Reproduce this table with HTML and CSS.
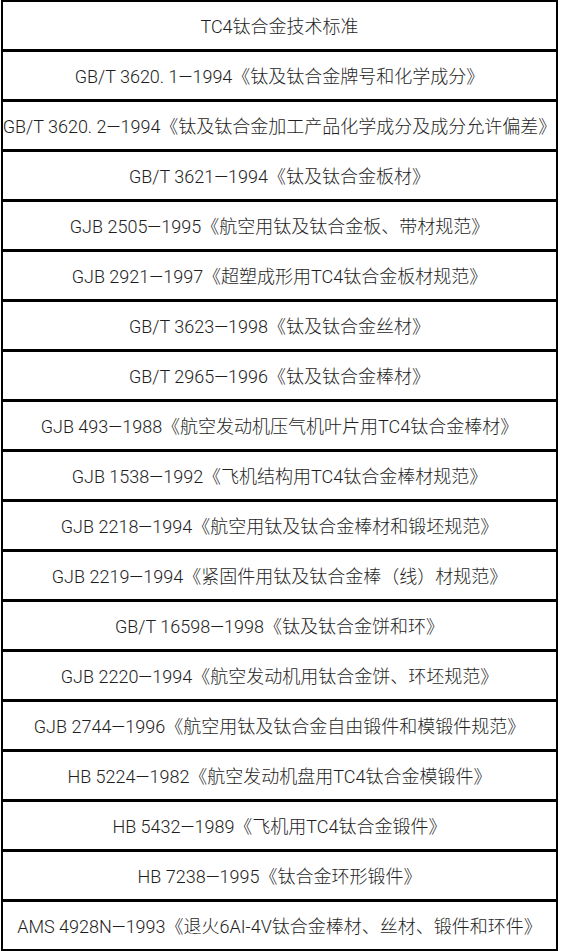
FILE: index.html
```html
<!DOCTYPE html>
<html lang="zh-CN">
<head>
<meta charset="utf-8">
<title>TC4钛合金技术标准</title>
<link rel="stylesheet" href="styles.css">
</head>
<body>
<div class="table">
  <div class="row">TC4钛合金技术标准</div>
  <div class="row">GB/T 3620. 1—1994《钛及钛合金牌号和化学成分》</div>
  <div class="row">GB/T 3620. 2—1994《钛及钛合金加工产品化学成分及成分允许偏差》</div>
  <div class="row">GB/T 3621—1994《钛及钛合金板材》</div>
  <div class="row">GJB 2505—1995《航空用钛及钛合金板、带材规范》</div>
  <div class="row">GJB 2921—1997《超塑成形用TC4钛合金板材规范》</div>
  <div class="row">GB/T 3623—1998《钛及钛合金丝材》</div>
  <div class="row">GB/T 2965—1996《钛及钛合金棒材》</div>
  <div class="row">GJB 493—1988《航空发动机压气机叶片用TC4钛合金棒材》</div>
  <div class="row">GJB 1538—1992《飞机结构用TC4钛合金棒材规范》</div>
  <div class="row">GJB 2218—1994《航空用钛及钛合金棒材和锻坯规范》</div>
  <div class="row">GJB 2219—1994《紧固件用钛及钛合金棒（线）材规范》</div>
  <div class="row">GB/T 16598—1998《钛及钛合金饼和环》</div>
  <div class="row">GJB 2220—1994《航空发动机用钛合金饼、环坯规范》</div>
  <div class="row">GJB 2744—1996《航空用钛及钛合金自由锻件和模锻件规范》</div>
  <div class="row">HB 5224—1982《航空发动机盘用TC4钛合金模锻件》</div>
  <div class="row">HB 5432—1989《飞机用TC4钛合金锻件》</div>
  <div class="row">HB 7238—1995《钛合金环形锻件》</div>
  <div class="row">AMS 4928N—1993《退火6AI-4V钛合金棒材、丝材、锻件和环件》</div>
</div>
</body>
</html>
```
FILE: styles.css
```css
html, body {
  margin: 0;
  padding: 0;
  background: #ffffff;
}
body {
  font-family: "Roboto", "Noto Sans CJK SC", sans-serif;
  font-weight: 300;
  color: #1e1e1e;
  overflow: hidden;
}
.table {
  margin-left: 1px;
  width: 557px;
  box-sizing: border-box;
  border-left: 2px solid #000;
  border-right: 2px solid #000;
  border-top: 2px solid #000;
  display: flex;
  flex-direction: column;
}
.row {
  height: 50px;
  box-sizing: border-box;
  border-bottom: 3px solid #000;
  display: flex;
  align-items: center;
  justify-content: center;
  font-size: 18px;
  white-space: nowrap;
  padding-bottom: 1px;
}
```
